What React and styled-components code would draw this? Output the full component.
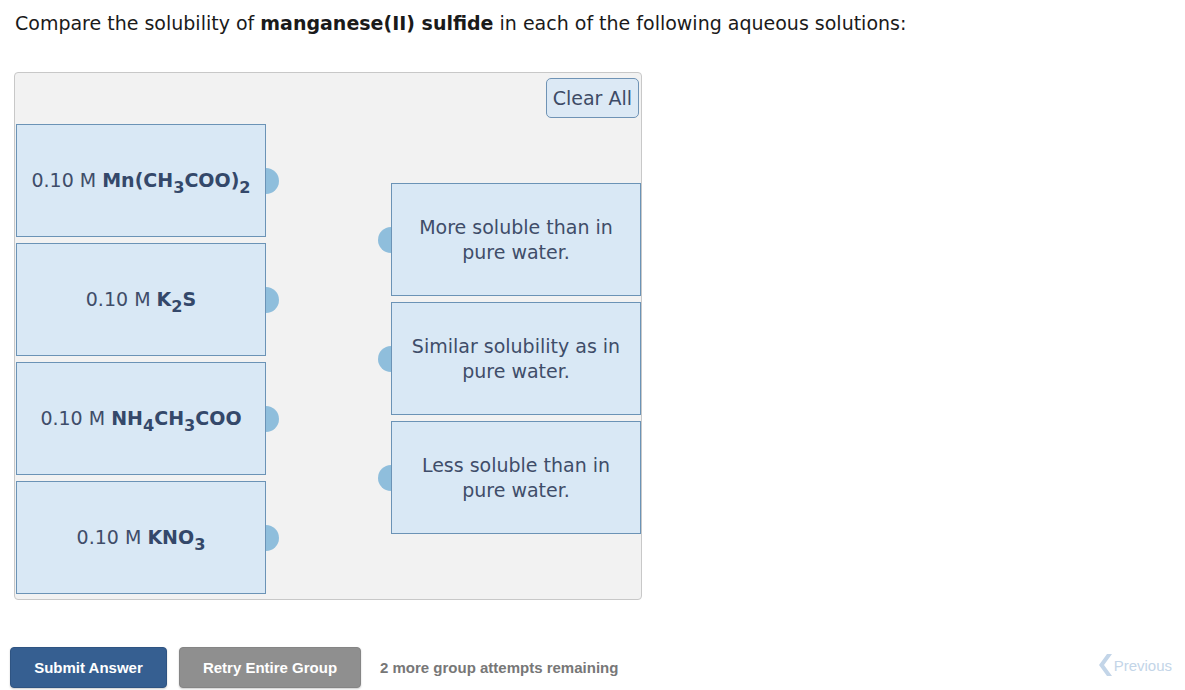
import React from "react";
import styled, { createGlobalStyle } from "styled-components";

const GlobalStyle = createGlobalStyle`
  html, body {
    margin: 0;
    padding: 0;
    background: #ffffff;
  }
  body {
    font-family: Verdana, "DejaVu Sans", sans-serif;
    color: #222;
  }
`;

const Page = styled.div`
  width: 1185px;
  height: 690px;
  box-sizing: border-box;
  padding: 10px 10px 0 14px;
  position: relative;
`;

const Question = styled.p`
  margin: 0 0 0 1px;
  font-size: 19px;
  line-height: 26px;
  color: #1a1a1a;
  b {
    font-weight: bold;
  }
`;

const Panel = styled.div`
  margin-top: 36px;
  width: 628px;
  box-sizing: border-box;
  background: #f2f2f2;
  border: 1px solid #c8c8c8;
  border-radius: 4px;
  padding: 5px 0 5px 1px;
`;

const TopBar = styled.div`
  display: flex;
  justify-content: flex-end;
  margin: 0 2px 6px 0;
`;

const ClearButton = styled.button`
  font-family: Verdana, "DejaVu Sans", sans-serif;
  font-size: 19px;
  color: #3d4b66;
  background: #dce9f5;
  border: 1px solid #6f93b5;
  border-radius: 5px;
  height: 40px;
  padding: 0 6px;
  cursor: pointer;
`;

const Columns = styled.div`
  display: flex;
  justify-content: space-between;
  align-items: flex-start;
`;

const Stack = styled.div`
  display: flex;
  flex-direction: column;
  gap: 6px;
  margin-top: ${(p) => p.offset || 0}px;
`;

const Card = styled.div`
  position: relative;
  width: 250px;
  height: 113px;
  box-sizing: border-box;
  background: #d9e8f5;
  border: 1px solid #6b93b6;
  display: flex;
  align-items: center;
  justify-content: center;
  text-align: center;
  padding: 0 10px;
  font-size: 19px;
  line-height: 25px;
  color: #3f4d69;

  &::before {
    content: "";
    position: absolute;
    top: 50%;
    ${(p) => (p.side === "right" ? "right: -14px;" : "left: -14px;")}
    width: 26px;
    height: 26px;
    margin-top: -13px;
    border-radius: 50%;
    background: #8fbedc;
    z-index: -1;
  }
`;

const CardWrap = styled.div`
  position: relative;
  z-index: 0;
`;

const Formula = styled.b`
  color: #34486a;
  font-weight: bold;
  sub {
    font-size: 0.85em;
    vertical-align: -0.35em;
    line-height: 0;
  }
`;

const Footer = styled.div`
  display: flex;
  align-items: center;
  margin-top: 47px;
  margin-left: -4px;
`;

const ActionButton = styled.button`
  font-family: Arial, "Liberation Sans", sans-serif;
  font-weight: bold;
  font-size: 15px;
  color: #ffffff;
  background: ${(p) => p.bg};
  border: 1px solid ${(p) => p.edge};
  border-radius: 4px;
  height: 41px;
  width: ${(p) => p.w}px;
  margin-right: ${(p) => p.gap}px;
  box-shadow: 0 1px 2px rgba(0, 0, 0, 0.2);
  cursor: pointer;
`;

const Attempts = styled.span`
  font-family: Arial, "Liberation Sans", sans-serif;
  font-weight: bold;
  font-size: 15px;
  color: #777777;
`;

const Previous = styled.div`
  position: absolute;
  right: 13px;
  bottom: 14px;
  display: flex;
  align-items: center;
  gap: 2px;
  font-family: Arial, "Liberation Sans", sans-serif;
  font-size: 15px;
  color: #c3d5e8;
`;

const left = [
  <>0.10 M <Formula>Mn(CH<sub>3</sub>COO)<sub>2</sub></Formula></>,
  <>0.10 M <Formula>K<sub>2</sub>S</Formula></>,
  <>0.10 M <Formula>NH<sub>4</sub>CH<sub>3</sub>COO</Formula></>,
  <>0.10 M <Formula>KNO<sub>3</sub></Formula></>,
];

const right = [
  "More soluble than in pure water.",
  "Similar solubility as in pure water.",
  "Less soluble than in pure water.",
];

export default function App() {
  return (
    <>
      <GlobalStyle />
      <Page>
        <Question>
          Compare the solubility of <b>manganese(II) sulfide</b> in each of the following aqueous solutions:
        </Question>
        <Panel>
          <TopBar>
            <ClearButton>Clear All</ClearButton>
          </TopBar>
          <Columns>
            <Stack>
              {left.map((c, i) => (
                <CardWrap key={i}>
                  <Card side="right">
                    <span>{c}</span>
                  </Card>
                </CardWrap>
              ))}
            </Stack>
            <Stack offset={59}>
              {right.map((t, i) => (
                <CardWrap key={i}>
                  <Card side="left">
                    <span>{t}</span>
                  </Card>
                </CardWrap>
              ))}
            </Stack>
          </Columns>
        </Panel>
        <Footer>
          <ActionButton bg="#365f91" edge="#2f5482" w={157} gap={12}>
            Submit Answer
          </ActionButton>
          <ActionButton bg="#8f8f8f" edge="#858585" w={182} gap={19}>
            Retry Entire Group
          </ActionButton>
          <Attempts>2 more group attempts remaining</Attempts>
        </Footer>
        <Previous>
          <svg width="14" height="22" viewBox="0 0 14 22">
            <path d="M9 0 L14 0 L6 11 L14 22 L9 22 L1 11 Z" fill="#c3d5e8" />
          </svg>
          Previous
        </Previous>
      </Page>
    </>
  );
}
